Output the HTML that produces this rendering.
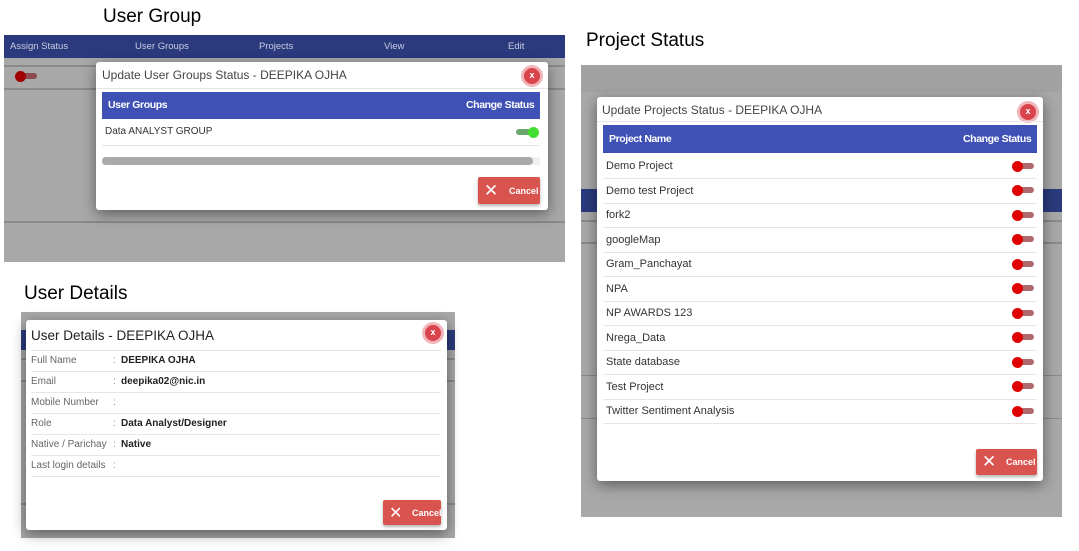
<!DOCTYPE html>
<html><head><meta charset="utf-8">
<style>
*{margin:0;padding:0;box-sizing:border-box}
body{width:1079px;height:551px;background:#fff;position:relative;overflow:hidden;font-family:"Liberation Sans",sans-serif}
.a{position:absolute}
.lbl{font-size:19px;color:#000;white-space:nowrap}
.gray{background:#a8a8a8}
.modal{background:#fff;border-radius:3px;box-shadow:0 4px 14px rgba(0,0,0,.45)}
.hdr{background:#3f51b5;color:#fff;font-weight:bold;font-size:10.5px;letter-spacing:-.4px}
.t{font-size:11px;color:#333;white-space:nowrap}
.line{height:1px;background:#e6e6e6}
.dl{height:2px;background:#8a8a8a}
.cls{width:16px;height:16px;border-radius:50%;background:#d9434b;box-shadow:0 0 0 3px rgba(225,90,100,.45);color:#fff;font-size:9px;text-align:center;line-height:15px;font-weight:bold}
.btn{background:#d9534f;border-radius:2px;color:#fff;font-size:9px;font-weight:bold;box-shadow:0 2px 3px rgba(0,0,0,.3)}
.tg{width:22px;height:10px}
.tg i{position:absolute;left:4px;top:2px;width:18px;height:6px;border-radius:3px;background:#b06a6e}
.tg b{position:absolute;left:0;top:0;width:11px;height:11px;border-radius:50%;background:#e00000}
</style></head><body>

<div class="a lbl" style="left:103px;top:6px">User Group</div>
<div class="a lbl" style="left:586px;top:30px">Project Status</div>
<div class="a lbl" style="left:24px;top:283px">User Details</div>

<!-- Section 1 -->
<div class="a gray" style="left:4px;top:35px;width:561px;height:227px"></div>
<div class="a" style="left:4px;top:35px;width:561px;height:23px;background:#2b3a7d"></div>
<div class="a" style="left:10px;top:41px;font-size:9.5px;color:#c8cce0">Assign Status</div>
<div class="a" style="left:135px;top:41px;font-size:9.5px;color:#c8cce0">User Groups</div>
<div class="a" style="left:259px;top:41px;font-size:9.5px;color:#c8cce0">Projects</div>
<div class="a" style="left:384px;top:41px;font-size:9.5px;color:#c8cce0">View</div>
<div class="a" style="left:508px;top:41px;font-size:9.5px;color:#c8cce0">Edit</div>
<div class="a dl" style="left:4px;top:65px;width:561px"></div>
<div class="a dl" style="left:4px;top:88px;width:561px"></div>
<div class="a dl" style="left:4px;top:221px;width:561px"></div>
<div class="a tg" style="left:15px;top:71px"><i style="background:#8a4a50"></i><b style="background:#a00000"></b></div>

<div class="a modal" style="left:96px;top:62px;width:452px;height:148px"></div>
<div class="a" style="left:102px;top:68px;font-size:12px;color:#444">Update User Groups Status - DEEPIKA OJHA</div>
<div class="a cls" style="left:524px;top:68px">x</div>
<div class="a line" style="left:96px;top:88px;width:452px"></div>
<div class="a hdr" style="left:102px;top:92px;width:438px;height:27px"></div>
<div class="a hdr" style="left:108px;top:99px;background:none">User Groups</div>
<div class="a hdr" style="left:466px;top:99px;background:none">Change Status</div>
<div class="a t" style="left:105px;top:126px;font-size:10px">Data ANALYST GROUP</div>
<div class="a tg" style="left:516px;top:127px"><i style="left:0;background:#6aa86a;width:18px"></i><b style="left:12px;background:#44dd33"></b></div>
<div class="a line" style="left:102px;top:145px;width:438px"></div>
<div class="a" style="left:102px;top:157px;width:438px;height:8px;background:#f0f0f0"></div>
<div class="a" style="left:102px;top:157px;width:431px;height:8px;background:#aaa;border-radius:4px"></div>
<div class="a btn" style="left:478px;top:177px;width:62px;height:27px"><span class="a" style="left:6px;top:4px;font-size:17px;font-weight:normal">✕</span><span class="a" style="left:31px;top:9px">Cancel</span></div>

<!-- Section 2 -->
<div class="a gray" style="left:21px;top:312px;width:434px;height:226px"></div>
<div class="a" style="left:21px;top:330px;width:434px;height:20px;background:#2b3a7d"></div>
<div class="a dl" style="left:21px;top:358px;width:434px"></div>
<div class="a dl" style="left:21px;top:380px;width:434px"></div>
<div class="a dl" style="left:21px;top:503px;width:434px"></div>
<div class="a modal" style="left:26px;top:320px;width:421px;height:210px"></div>
<div class="a" style="left:31px;top:328px;font-size:13.5px;color:#222">User Details - DEEPIKA OJHA</div>
<div class="a cls" style="left:425px;top:325px">x</div>
<div class="a line" style="left:31px;top:350px;width:410px"></div>
<div class="a line" style="left:31px;top:371px;width:410px"></div>
<div class="a line" style="left:31px;top:392px;width:410px"></div>
<div class="a line" style="left:31px;top:413px;width:410px"></div>
<div class="a line" style="left:31px;top:434px;width:410px"></div>
<div class="a line" style="left:31px;top:455px;width:410px"></div>
<div class="a line" style="left:31px;top:476px;width:410px"></div>
<div class="a t" style="left:31px;top:355px;font-size:10px;color:#666">Full Name</div>
<div class="a t" style="left:31px;top:376px;font-size:10px;color:#666">Email</div>
<div class="a t" style="left:31px;top:397px;font-size:10px;color:#666">Mobile Number</div>
<div class="a t" style="left:31px;top:418px;font-size:10px;color:#666">Role</div>
<div class="a t" style="left:31px;top:439px;font-size:10px;color:#666">Native / Parichay</div>
<div class="a t" style="left:31px;top:460px;font-size:10px;color:#666">Last login details</div>
<div class="a t" style="left:113px;top:355px;font-size:10px;color:#888">:</div>
<div class="a t" style="left:113px;top:376px;font-size:10px;color:#888">:</div>
<div class="a t" style="left:113px;top:397px;font-size:10px;color:#888">:</div>
<div class="a t" style="left:113px;top:418px;font-size:10px;color:#888">:</div>
<div class="a t" style="left:113px;top:439px;font-size:10px;color:#888">:</div>
<div class="a t" style="left:113px;top:460px;font-size:10px;color:#888">:</div>
<div class="a t" style="left:121px;top:355px;font-size:10px;font-weight:bold;color:#222">DEEPIKA OJHA</div>
<div class="a t" style="left:121px;top:376px;font-size:10px;font-weight:bold;color:#222">deepika02@nic.in</div>
<div class="a t" style="left:121px;top:418px;font-size:10px;font-weight:bold;color:#222">Data Analyst/Designer</div>
<div class="a t" style="left:121px;top:439px;font-size:10px;font-weight:bold;color:#222">Native</div>
<div class="a btn" style="left:383px;top:500px;width:58px;height:25px"><span class="a" style="left:6px;top:3px;font-size:16px;font-weight:normal">✕</span><span class="a" style="left:29px;top:8px">Cancel</span></div>

<!-- Section 3 -->
<div class="a gray" style="left:581px;top:65px;width:481px;height:452px"></div>
<div class="a" style="left:581px;top:65px;width:481px;height:27px;background:#a2a2a2"></div>
<div class="a" style="left:581px;top:189px;width:481px;height:23px;background:#2b3a7d"></div>
<div class="a dl" style="left:581px;top:220px;width:481px"></div>
<div class="a dl" style="left:581px;top:242px;width:481px"></div>
<div class="a dl" style="left:581px;top:375px;width:481px;height:1px"></div>
<div class="a dl" style="left:581px;top:418px;width:481px;height:1px"></div>
<div class="a modal" style="left:597px;top:97px;width:446px;height:384px"></div>
<div class="a" style="left:602px;top:103px;font-size:12px;color:#444">Update Projects Status - DEEPIKA OJHA</div>
<div class="a cls" style="left:1020px;top:104px">x</div>
<div class="a line" style="left:597px;top:121px;width:446px"></div>
<div class="a hdr" style="left:603px;top:125px;width:434px;height:28px"></div>
<div class="a hdr" style="left:609px;top:133px;background:none">Project Name</div>
<div class="a hdr" style="left:963px;top:133px;background:none">Change Status</div>

<div class="a btn" style="left:976px;top:449px;width:61px;height:26px"><span class="a" style="left:6px;top:3px;font-size:17px;font-weight:normal">✕</span><span class="a" style="left:30px;top:8px">Cancel</span></div>

<div class="a t" style="left:606px;top:160px">Demo Project</div>
<div class="a t" style="left:606px;top:185px">Demo test Project</div>
<div class="a t" style="left:606px;top:209px">fork2</div>
<div class="a t" style="left:606px;top:234px">googleMap</div>
<div class="a t" style="left:606px;top:258px">Gram_Panchayat</div>
<div class="a t" style="left:606px;top:283px">NPA</div>
<div class="a t" style="left:606px;top:307px">NP AWARDS 123</div>
<div class="a t" style="left:606px;top:332px">Nrega_Data</div>
<div class="a t" style="left:606px;top:356px">State database</div>
<div class="a t" style="left:606px;top:381px">Test Project</div>
<div class="a t" style="left:606px;top:405px">Twitter Sentiment Analysis</div>

<div class="a line" style="left:603px;top:178px;width:434px"></div>
<div class="a line" style="left:603px;top:203px;width:434px"></div>
<div class="a line" style="left:603px;top:227px;width:434px"></div>
<div class="a line" style="left:603px;top:252px;width:434px"></div>
<div class="a line" style="left:603px;top:276px;width:434px"></div>
<div class="a line" style="left:603px;top:301px;width:434px"></div>
<div class="a line" style="left:603px;top:325px;width:434px"></div>
<div class="a line" style="left:603px;top:350px;width:434px"></div>
<div class="a line" style="left:603px;top:374px;width:434px"></div>
<div class="a line" style="left:603px;top:399px;width:434px"></div>
<div class="a line" style="left:603px;top:423px;width:434px"></div>

<div class="a tg" style="left:1012px;top:161px"><i></i><b></b></div>
<div class="a tg" style="left:1012px;top:185px"><i></i><b></b></div>
<div class="a tg" style="left:1012px;top:210px"><i></i><b></b></div>
<div class="a tg" style="left:1012px;top:234px"><i></i><b></b></div>
<div class="a tg" style="left:1012px;top:259px"><i></i><b></b></div>
<div class="a tg" style="left:1012px;top:283px"><i></i><b></b></div>
<div class="a tg" style="left:1012px;top:308px"><i></i><b></b></div>
<div class="a tg" style="left:1012px;top:332px"><i></i><b></b></div>
<div class="a tg" style="left:1012px;top:357px"><i></i><b></b></div>
<div class="a tg" style="left:1012px;top:381px"><i></i><b></b></div>
<div class="a tg" style="left:1012px;top:406px"><i></i><b></b></div>
</body></html>
